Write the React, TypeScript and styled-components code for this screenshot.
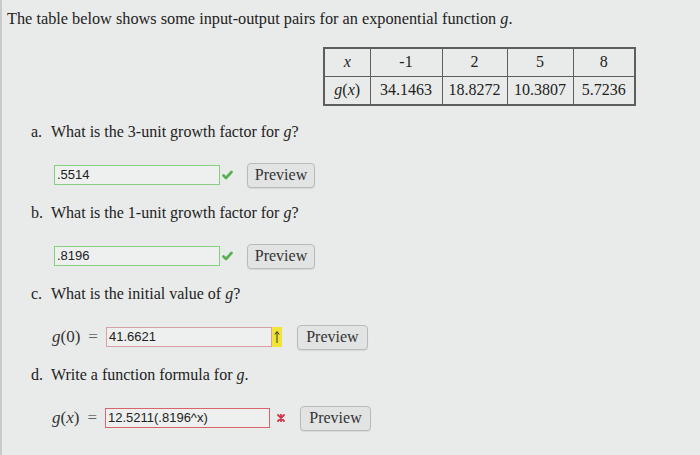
import React from "react";
import styled, { createGlobalStyle } from "styled-components";

const Global = createGlobalStyle`
  html, body { margin: 0; padding: 0; }
  body {
    background: #e9ebea;
    font-family: "Liberation Serif", "Times New Roman", serif;
    color: #222;
  }
`;

const Page = styled.div`
  width: 700px;
  height: 455px;
  box-sizing: border-box;
  border-left: 2px solid #c9cbca;
  padding: 9px 0 0 5px;
  overflow: hidden;
`;

const Title = styled.div`
  font-size: 16.3px;
  line-height: 20px;
`;

const Var = styled.i`
  font-family: "Liberation Serif", "Times New Roman", serif;
  font-style: italic;
`;

const TableWrap = styled.div`
  display: flex;
  justify-content: flex-end;
  padding-right: 64px;
  margin-top: 18px;
`;

const Table = styled.table`
  border-collapse: collapse;
  font-size: 16px;
  border: 2px solid #5e5e5e;
`;

const Cell = styled.td<{ $w: number; $h: number }>`
  border: 1.5px solid #5e5e5e;
  width: ${(p) => p.$w}px;
  height: ${(p) => p.$h}px;
  padding: 0;
  text-align: center;
  box-sizing: border-box;
  line-height: 18px;
`;

const Parts = styled.div`
  margin-top: 16px;
  display: flex;
  flex-direction: column;
`;

const Part = styled.div`
  display: flex;
  flex-direction: column;
  margin-bottom: 15px;
`;

const Question = styled.div`
  display: flex;
  font-size: 16px;
  line-height: 20px;
  padding-left: 24px;
`;

const Letter = styled.span`
  width: 20px;
`;

const AnswerRow = styled.div<{ $indent: number }>`
  display: flex;
  align-items: center;
  height: 26px;
  margin-top: 20px;
  padding-left: ${(p) => p.$indent}px;
`;

const MathLabel = styled.span`
  font-size: 17px;
  color: #333;
  display: flex;
  align-items: center;
  margin-right: 8px;
  white-space: pre;
`;

const Equals = styled.span`
  color: #666;
  margin-left: 8px;
  font-style: normal;
`;

const Field = styled.div<{ $w: number; $border: string }>`
  width: ${(p) => p.$w}px;
  height: 20px;
  box-sizing: border-box;
  border: 1.5px solid ${(p) => p.$border};
  background: #eef0ef;
  font-family: "Liberation Sans", Arial, sans-serif;
  font-size: 13px;
  line-height: 17px;
  padding-left: 2px;
  color: #222;
`;

const StatusSlot = styled.span<{ $w: number }>`
  width: ${(p) => p.$w}px;
  display: flex;
  align-items: center;
  justify-content: center;
`;

const YellowBox = styled.span`
  width: 10px;
  height: 20px;
  background: #f2e435;
  display: flex;
  align-items: center;
  justify-content: center;
  margin-right: 15px;
`;

const Preview = styled.button<{ $w: number }>`
  font-family: "Liberation Serif", "Times New Roman", serif;
  font-size: 16px;
  color: #333;
  background: #e2e4e3;
  border: 1px solid #b9bbba;
  border-radius: 4px;
  height: 25px;
  width: ${(p) => p.$w}px;
  padding: 0;
  box-shadow: 0 1px 1px rgba(0,0,0,0.08);
`;

const Check = () => (
  <svg width="11" height="10" viewBox="0 0 11 10">
    <path d="M1.5 5.5 L4 8 L9.5 2" stroke="#55b050" strokeWidth="2.6" fill="none" strokeLinecap="round" strokeLinejoin="round" />
  </svg>
);

const Star = () => (
  <svg width="8" height="8" viewBox="0 0 8 8">
    <path d="M1 1 L7 7 M7 1 L1 7 M4 0.5 L4 7.5" stroke="#cc3b4a" strokeWidth="1.8" strokeLinecap="round" />
  </svg>
);

const Arrow = () => (
  <svg width="6" height="14" viewBox="0 0 6 14">
    <path d="M3 13 L3 2 M0.8 4.5 L3 1.5 L5.2 4.5" stroke="#333" strokeWidth="1" fill="none" />
  </svg>
);

export default function App() {
  return (
    <>
      <Global />
      <Page>
        <Title>
          The table below shows some input-output pairs for an exponential function <Var>g</Var>.
        </Title>
        <TableWrap>
          <Table>
            <tbody>
              <tr>
                <Cell $w={46} $h={28}><Var>x</Var></Cell>
                <Cell $w={72} $h={28}>-1</Cell>
                <Cell $w={65} $h={28}>2</Cell>
                <Cell $w={66} $h={28}>5</Cell>
                <Cell $w={62} $h={28}>8</Cell>
              </tr>
              <tr>
                <Cell $w={46} $h={29}><Var>g</Var>(<Var>x</Var>)</Cell>
                <Cell $w={72} $h={29}>34.1463</Cell>
                <Cell $w={65} $h={29}>18.8272</Cell>
                <Cell $w={66} $h={29}>10.3807</Cell>
                <Cell $w={62} $h={29}>5.7236</Cell>
              </tr>
            </tbody>
          </Table>
        </TableWrap>
        <Parts>
          <Part>
            <Question><Letter>a.</Letter><span>What is the 3-unit growth factor for <Var>g</Var>?</span></Question>
            <AnswerRow $indent={47}>
              <Field $w={166} $border="#86cf7f">.5514</Field>
              <StatusSlot $w={14}><Check /></StatusSlot>
              <StatusSlot $w={13} />
              <Preview $w={68}>Preview</Preview>
            </AnswerRow>
          </Part>
          <Part>
            <Question><Letter>b.</Letter><span>What is the 1-unit growth factor for <Var>g</Var>?</span></Question>
            <AnswerRow $indent={47}>
              <Field $w={166} $border="#86cf7f">.8196</Field>
              <StatusSlot $w={14}><Check /></StatusSlot>
              <StatusSlot $w={13} />
              <Preview $w={68}>Preview</Preview>
            </AnswerRow>
          </Part>
          <Part>
            <Question><Letter>c.</Letter><span>What is the initial value of <Var>g</Var>?</span></Question>
            <AnswerRow $indent={45}>
              <MathLabel><Var>g</Var>(0)<Equals>=</Equals></MathLabel>
              <Field $w={166} $border="#d9a0a4">41.6621</Field>
              <YellowBox><Arrow /></YellowBox>
              <Preview $w={71}>Preview</Preview>
            </AnswerRow>
          </Part>
          <Part>
            <Question><Letter>d.</Letter><span>Write a function formula for <Var>g</Var>.</span></Question>
            <AnswerRow $indent={45}>
              <MathLabel><Var>g</Var>(<Var>x</Var>)<Equals>=</Equals></MathLabel>
              <Field $w={165} $border="#d9646c">12.5211(.8196^x)</Field>
              <StatusSlot $w={22}><Star /></StatusSlot>
              <StatusSlot $w={8} />
              <Preview $w={71}>Preview</Preview>
            </AnswerRow>
          </Part>
        </Parts>
      </Page>
    </>
  );
}
